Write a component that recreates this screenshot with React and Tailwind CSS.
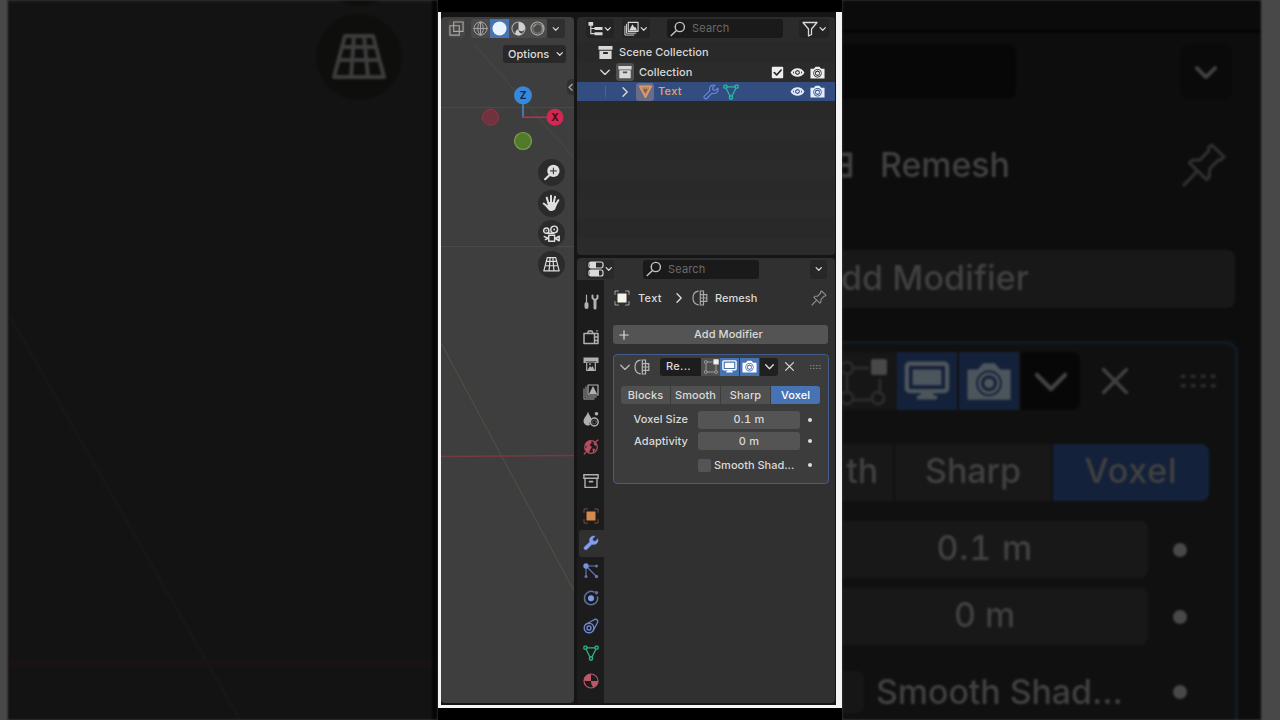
import React from "react";

const Svg = ({ className = "size-4", children, vb = "0 0 16 16", sw = 1.2 }) => (
  <svg viewBox={vb} className={"shrink-0 " + className} fill="none" stroke="currentColor" strokeWidth={sw} strokeLinecap="round" strokeLinejoin="round">
    {children}
  </svg>
);

const F = { fill: "currentColor", stroke: "none" };

const ChevronDown = ({ className = "size-[7.5px]", sw = 1.3 }) => (
  <Svg className={className} vb="0 0 8 8" sw={sw}><path d="M1.2 2.8 4 5.6 6.8 2.8" /></Svg>
);
const ChevronRight = ({ className = "size-3", sw = 1.4 }) => (
  <Svg className={className} vb="0 0 12 12" sw={sw}><path d="M4 1.8 8.200 6 4 10.200" /></Svg>
);
const Search = () => (
  <Svg className="size-4" sw={1.4}><circle cx="9.8" cy="6" r="4.6" /><path d="M6.5 9.5 1.2 14.6" /></Svg>
);
const Archive = ({ className }) => (
  <Svg className={className}>
    <path {...F} d="M0.5 1h15v4h-15z" />
    <path {...F} fillRule="evenodd" d="M1.5 6h13v9h-13z M5.5 7.5v2h5V7.5z" />
  </Svg>
);
const ArchiveLine = ({ className }) => (
  <Svg className={className} sw={1.4}><path strokeLinejoin="miter" d="M.9 1.7h14.2v3.5H.9zM2 5.4v9h12v-9" /><path d="M6.5 8.600h3" strokeWidth="1.800" /></Svg>
);
const Eye = () => (
  <Svg className="size-[15px]">
    <path {...F} fillRule="evenodd" d="M.6 8C3.5 1.8 12.500 1.800 15.400 8 12.500 14.200 3.500 14.200.6 8zM3 8c2 3.600 8 3.600 10 0-2-3.600-8-3.600-10 0z" />
    <circle cx="8" cy="8" r="3.200" strokeWidth="1.300" /><circle cx="8" cy="8" r="1.400" {...F} />
  </Svg>
);
const Camera = ({ className = "size-[15px]" }) => (
  <Svg className={className}>
    <path {...F} fillRule="evenodd" d="M.5 4h3.600L6 1.800h4L11.900 4h3.600v10.500H.5zM8 4.300a4.500 4.500 0 1 0 0 9 4.500 4.500 0 0 0 0-9z" />
    <circle cx="8" cy="8.800" r="3.300" strokeWidth="1" /><circle cx="8" cy="8.800" r="1.700" {...F} />
  </Svg>
);
const Monitor = ({ className = "size-4" }) => (
  <Svg className={className} sw={1.500}>
    <rect x="1" y="2" width="14" height="9.500" rx="1" /><path {...F} d="M3 4h10v5.500H3zM6 12h4l.5 1.200H5.500zM4.500 13h7v1.400h-7z" />
  </Svg>
);
const EditMode = ({ className = "size-4" }) => (
  <Svg className={className} sw={1}>
    <path d="M4.300 3h5M3 4.500v7M4.500 13h7M13 6.500v5" />
    <circle cx="2.800" cy="3" r="1.500" /><circle cx="2.800" cy="13" r="1.500" /><circle cx="13" cy="13" r="1.500" />
    <rect x="10.400" y=".3" width="5.300" height="5.300" rx=".6" fill="#f0f0f0" stroke="none" />
  </Svg>
);
const RemeshIcon = ({ className = "size-4" }) => (
  <Svg className={className} sw={1.2}>
    <path d="M6.200 1.200C2.800 1.800 1 4.500 1 8s1.800 6.200 5.200 6.800" />
    <path strokeLinejoin="miter" d="M8.300 1h3.200v14H8.300zM8.300 4.600h6.500v6.800H8.300M8.300 8h6.500" />
  </Svg>
);
const Pin = ({ className = "size-4" }) => (
  <Svg className={className} sw={1.1}><path d="M10.600 1 15 5.200 13.800 6.300 13 6.200 10 9.300 9.800 12.300 8.900 13.100 2.900 7.300 3.900 6.300 6.600 6.200 9.700 3 9.600 2zM5.600 10.200 1 15" /></Svg>
);
const Close = ({ className = "size-3" }) => (
  <Svg className={className} vb="0 0 12 12" sw={1.3}><path d="M1.700 1.700l8.600 8.600M10.300 1.700l-8.600 8.600" /></Svg>
);
const Grip = ({ className = "h-1.5 w-3" }) => (
  <svg viewBox="0 0 12 6" className={"shrink-0 " + className} fill="currentColor">
    {[0, 1, 2, 3].map((i) => (
      <g key={i}><rect x={i * 3 + 0.5} y="1.100" width="1.500" height="1" /><rect x={i * 3 + 0.5} y="3.900" width="1.500" height="1" /></g>
    ))}
  </svg>
);
const GridPersp = ({ className = "size-[17px]", sw = 1.1 }) => (
  <Svg className={className} sw={sw}><path d="M4 1.500h8l3.200 12.500H.8zM3.200 5h9.600M2.200 9.200h11.600M6.700 1.500 5.700 14M9.300 1.500l1 12.500" /></Svg>
);
const Wrench = ({ className = "size-4", fill = "none", sw = 1.1 }) => (
  <Svg className={className} sw={sw}>
    <path fill={fill} d="M14.800 4.100 12.300 6.300 10 5.900 9.600 3.700 12 1.200C9.500.5 7 1.800 6.600 4.300c-.2 1 0 1.800.2 2.600L1.300 12.100c-1.100 1.500.8 3.600 2.500 2.400L9 9.200c3.800 1.200 7-1.800 5.800-5.100z" />
  </Svg>
);
const Mesh = ({ className = "size-4" }) => (
  <Svg className={className} sw={1.3}>
    <path d="M4 2.800h8M3.200 4.500 7 12M12.800 4.500 9 12" />
    <rect x=".9" y="1.200" width="3" height="3" rx=".8" /><rect x="12.100" y="1.200" width="3" height="3" rx=".8" /><rect x="6.500" y="12" width="3" height="3" rx=".8" />
  </Svg>
);
const ObjectData = ({ className, color }) => (
  <Svg className={className} sw={1}>
    <path opacity=".65" d="M1 4.500V1h3.500M11.500 1H15v3.500M15 11.500V15h-3.500M4.500 15H1v-3.500" />
    <rect x="3.500" y="3.500" width="9" height="9" fill={color} stroke="none" />
  </Svg>
);

const HeaderBox = ({ className, children }) => (
  <div className={"flex h-[19px] shrink-0 items-center justify-center gap-px rounded-[3px] " + className}>{children}</div>
);

const SearchField = ({ className }) => (
  <div className={"flex h-[19px] shrink-0 items-center rounded-[3px] bg-[#1a1a1a] pl-[3px] font-normal text-[#6a6a6a] " + className}>
    <span className="flex text-[#c4c4c4]"><Search /></span>
    <span className="ml-[6px] tracking-[0.15px]">Search</span>
  </div>
);

const RoundButton = ({ children }) => (
  <div className="flex size-[27px] items-center justify-center rounded-full bg-[#2b2b2b] pr-px text-[#dedede]">{children}</div>
);

function Viewport() {
  return (
    <section className="relative flex h-[686px] w-[133px] shrink-0 flex-col overflow-hidden rounded-[4px] bg-[#3e3e3e]">
      <svg className="absolute inset-0" width="133" height="686" fill="none">
        <path d="M0 90.500h133M0 229.500h133" stroke="#4a4a4a" />
        <path d="M33 27 133 141" stroke="#4b4a40" />
        <path d="M0 326 133 574" stroke="#545341" />
        <path d="M0 439.500 133 438.500" stroke="#793940" strokeWidth="1.300" />
      </svg>
      <div className="relative flex h-[23px] items-center pl-[7px] text-[#a9a9a9]">
        <div className="flex h-[19px] w-[17px] items-center justify-center rounded-sm bg-[#484644]">
          <Svg className="size-[15px]"><path d="M5 1h10v10H5zM1 5h10v10H1z" strokeLinejoin="miter" /></Svg>
        </div>
        <div className="ml-[6px] flex h-[19px] overflow-hidden rounded-[3px] bg-[#4b4a48]">
          <span className="flex w-[19px] items-center justify-center"><Svg className="size-[15px]" sw={1}><circle cx="8" cy="8" r="7" /><path d="M1 8h14M8 1v14M8 1C4 4 4 12 8 15M8 1c4 3 4 11 0 14" /></Svg></span>
          <span className="flex w-[19px] items-center justify-center bg-[#4772b3] text-[#e9f2ff]"><Svg className="size-[15px]"><circle cx="8" cy="8" r="7.500" {...F} /></Svg></span>
          <span className="flex w-[19px] items-center justify-center"><Svg className="size-[15px]"><circle cx="8" cy="8" r="7" /><path {...F} fill="#d0d0d0" d="M8 1a7 7 0 0 1 7 7c-1 3-5 4-7 1V1zM8 9c-2 0-3 1-3.500 5C6 15.500 10 15.500 12 14 9 13 8 11 8 9z" /></Svg></span>
          <span className="flex w-[19px] items-center justify-center"><Svg className="size-[15px]"><circle cx="8" cy="8" r="7" /><circle cx="8" cy="8" r="5" opacity=".5" /><path {...F} d="M12 2.500a7 7 0 0 1 1 10C14 9 13 6 12 2.500zM3.500 7c0-2 2-3.500 4-3.500C6 4.500 5 6 3.500 7z" /></Svg></span>
        </div>
        <div className="flex h-[19px] w-[18px] items-center justify-center rounded-r-[3px] bg-[#2f2f2f] text-[#d0d0d0]"><ChevronDown /></div>
      </div>
      <div className="relative ml-[62px] mt-[5px] flex h-[18px] w-[63px] items-center justify-between rounded-[3px] bg-[#292929] pl-[5px] pr-[3px] text-[#dedede]">
        Options<ChevronDown />
      </div>
      <div className="relative mt-px h-[90px]">
        <svg width="133" height="90" viewBox="441 64 133 90" fill="none">
          <path d="M523 104v13.500" stroke="#4a8ac4" strokeWidth="1.600" /><path d="M522.500 117.200H547" stroke="#bd3050" strokeWidth="1.600" />
          <circle cx="523" cy="95.300" r="9" fill="#3688dd" /><circle cx="555" cy="117.200" r="8.500" fill="#d02850" />
          <circle cx="490.500" cy="117.300" r="8" fill="#71323f" stroke="#943448" /><circle cx="523" cy="141" r="8.500" fill="#527a2b" stroke="#7ca347" strokeWidth="1.200" />
          <text x="523" y="99" textAnchor="middle" fontSize="10" fontWeight="700" fill="#10294a">Z</text>
          <text x="555" y="121" textAnchor="middle" fontSize="10" fontWeight="700" fill="#3e0b1b">X</text>
          <path d="M574 79h-3a5 5 0 0 0-4 4v8a5 5 0 0 0 4 4h3z" fill="#303030" /><path d="m572.500 84-3.500 3.300 3.500 3.300" stroke="#b0b0b0" strokeWidth="1.200" />
        </svg>
      </div>
      <div className="relative ml-[97px] mt-[5px] flex w-[27px] flex-col gap-[3.500px]">
        <RoundButton><Svg className="size-[17px]"><circle cx="9.800" cy="6.500" r="5.800" {...F} /><path d="M6 10.500 2 14.300" strokeWidth="2" /><path d="M9.800 3.800v5.400M7.100 6.500h5.400" stroke="#444" strokeWidth="1.100" /></Svg></RoundButton>
        <RoundButton><Svg className="size-[18px]"><path d="M5.800 8.500 4.200 3.200M8 7.500V1.500M10.300 8l1.300-5.500M12.200 9.500l2.300-4M5.500 11.500 1.500 8.500" strokeWidth="1.800" /><path {...F} d="M4.900 7h6.500l2 1.800-1.500 4.400C11 15.500 7 15.800 5.500 13.800L2.800 10.500l2.300-.5z" /></Svg></RoundButton>
        <RoundButton><Svg className="size-[18px]" sw={1.300}><circle cx="3.800" cy="5" r="2.300" /><circle cx="10.800" cy="4" r="3" /><circle cx="3.800" cy="5" r=".6" {...F} /><circle cx="10.800" cy="4" r=".8" {...F} /><path d="M4.500 7.300h6M6 9.200h5.200v5.300H6zM2 10.300l3.500 1.500L3 13M12 12l3.300-2v4z" /></Svg></RoundButton>
        <RoundButton><GridPersp /></RoundButton>
      </div>
    </section>
  );
}

function Outliner() {
  return (
    <section className="flex h-[238px] flex-col overflow-hidden rounded-[4px] bg-[#292929] text-[#d8d8d8]">
      <div className="flex h-[25px] shrink-0 items-center bg-[#2b2b2b] pb-0.5 pl-[9px]">
        <HeaderBox className="w-7 bg-[#242424]"><Svg className="size-[15px]"><path {...F} d="M.5 1h5v4h-5zM7 6.500h8.500v3.200H7zM7 12h8.500v3.200H7z" /><path d="M3 5v8.500h4M3 8h4" /></Svg><ChevronDown /></HeaderBox>
        <HeaderBox className="ml-[8px] w-7 bg-[#242424]"><Svg className="size-[15px]"><path d="M4.500 1.500h10.500v9.500H4.500z" /><path d="M2.700 3.500v9.500h10M1 5.500V15h9.500" strokeWidth="1" /><path {...F} d="m5.500 10 3.500-6.500 2 3.500 1-1 2 4z" /></Svg><ChevronDown /></HeaderBox>
        <SearchField className="ml-[17px] w-[116px]" />
        <HeaderBox className="ml-[16px] w-[30px] gap-[3px] bg-[#242424]"><Svg className="size-4" sw={1.300}><path d="M1 1.500h14L9.500 8v5.500l-3 1.500V8z" /></Svg><ChevronDown /></HeaderBox>
      </div>
      <div className="flex h-5 shrink-0 items-center pl-[21px]">
        <Archive className="size-[15px]" /><span className="ml-[6px]">Scene Collection</span>
      </div>
      <div className="flex h-5 shrink-0 items-center bg-[#2b2b2b] pl-[22px] pr-[10px]">
        <ChevronDown className="size-[12px]" sw={0.900} />
        <span className="ml-[5px] flex size-[18px] items-center justify-center rounded-[3px] bg-[#505050]"><Archive className="size-[14px]" /></span>
        <span className="ml-[5px]">Collection</span>
        <span className="ml-auto flex items-center gap-[6px] text-[#eee]">
          <Svg className="size-[13px]"><rect x="1" y="1" width="14" height="14" rx="1" {...F} /><path d="m4 8 3 3 5.500-6" stroke="#222" strokeWidth="2" /></Svg>
          <Eye /><span className="-ml-px flex"><Camera /></span>
        </span>
      </div>
      <div className="flex h-[19px] shrink-0 items-center bg-[#334d80] pl-7 pr-[10px]">
        <span className="h-[11px] w-px bg-[#4c6496]" />
        <span className="ml-[13px] flex"><ChevronRight /></span>
        <span className="ml-[5px] flex size-[18px] items-center justify-center rounded-[3px] bg-[#696c86] text-[#d99c72]"><Svg className="size-[15px]" sw={2}><path d="M2 2.500h12L8 14z" fill="#b8805e" /><path d="M6.800 6h2.400L8 8.500z" stroke="#6b5250" strokeWidth="1" /></Svg></span>
        <span className="ml-1 w-[45px] tracking-[0.3px] text-[#e0a468]">Text</span>
        <span className="flex gap-1"><span className="flex text-[#6f8ae2]"><Wrench className="size-[16px]" /></span><span className="flex text-[#26bba6]"><Mesh className="size-[16px]" /></span></span>
        <span className="ml-auto flex items-center gap-[5px] text-[#e4edff]"><Eye /><Camera /></span>
      </div>
      {["a", "b", "c", "d"].map((k) => (
        <div key={k} className="shrink-0"><div className="h-5 bg-[#292929]" /><div className="h-[19px] bg-[#2b2b2b]" /></div>
      ))}
    </section>
  );
}

const NavItem = ({ className = "text-[#b0b0b0]", children }) => (
  <div className={"ml-[2px] flex h-[27.500px] w-[25px] shrink-0 items-center justify-center rounded-l-[3px] pr-px " + className}>{children}</div>
);

function Nav() {
  return (
    <nav className="flex w-[27px] shrink-0 flex-col bg-[#1c1c1c] pt-[8.500px]">
      <NavItem><Svg className="size-4"><path d="M3.500 1v8" /><path d="M3.500 10v3" strokeWidth="4" /><path d="M12 7v7" strokeWidth="3" /><path d="M9.500 1.500v2.500L12 6.500l2.500-2.500V1.500" strokeWidth="2" /></Svg></NavItem>
      <div className="h-[7px]" />
      <NavItem><Svg className="size-4" sw={1.500}><path d="M1 4.500h14v10H1zM4.500 4.500l1-2.500h3.500l1 2.500M11.500 4.500v10M11.500 8H15M11.500 11.500H15M14 1.800v.2" /></Svg></NavItem>
      <NavItem><Svg className="size-4"><path {...F} d="M.5 1.500h15V7h-2.300V5H2.800v2H.5z" /><path d="M3.700 6h8.600v8.500H3.700z" /><path {...F} d="m4.500 14 2.500-4 1.500 1.500L9.500 10l2 4zM6 7.500h2v1.300H6z" /></Svg></NavItem>
      <NavItem><Svg className="size-4"><path d="M5 1h10v10H5z" /><path d="M3 3v10h10M1 5v10h10" strokeWidth="1.400" opacity=".65" /><path {...F} d="m6 10 4-8 4 8z" /></Svg></NavItem>
      <NavItem><Svg className="size-4"><path {...F} d="M5 .5c1 4 4 6 3.500 8.500C6.500 10 6 12 7 14c-3 1.500-6.500-.5-6.500-4C.5 7 4 5 5 .5z" /><circle cx="13.500" cy="2.800" r="1.800" {...F} /><circle cx="11.300" cy="11" r="3.900" strokeWidth="1.500" /><circle cx="11.300" cy="11" r="2" strokeWidth=".6" opacity=".6" /></Svg></NavItem>
      <NavItem className="text-[#b84c61]"><Svg className="size-4"><circle cx="8" cy="8" r="6.300" /><path {...F} d="M2 6c2-4 4-4 6-4.500L8.500 4l-2 2 2.500 2-2 3-1 3C4 13 2 11 2 9l2-1zM11 2.500l3 3.500-1.500 1-2-2zM9.500 9.500l3 .5-2.500 4z" /><path d="m12.500 3 2.500-2M2.500 13.500l-1.300 1.500" /></Svg></NavItem>
      <div className="h-[7px]" />
      <NavItem><ArchiveLine className="size-4" /></NavItem>
      <div className="h-[7px]" />
      <NavItem className="text-[#a36a44]"><ObjectData className="size-4" color="#d38a50" /></NavItem>
      <NavItem className="bg-[#303030] text-[#7f9df5]"><Wrench className="size-4" fill="currentColor" sw={0.500} /></NavItem>
      <NavItem className="text-[#6578ad]"><Svg className="size-4"><path d="M3 3h10M3 3v10M4 4l9 9" /><circle cx="3" cy="3" r="2.700" {...F} fill="#7892e0" /><circle cx="13.500" cy="3" r="1.500" {...F} /><circle cx="3" cy="13.500" r="1.500" {...F} /><circle cx="13.500" cy="13.500" r="1.700" {...F} /></Svg></NavItem>
      <NavItem className="text-[#5e7094]"><Svg className="size-4" sw={1.500}><path d="M11 2C7 0 1.500 3 1.500 8.500c0 5 5.500 7.500 9.500 5.500 2.500-1.300 4-4 3.500-7" /><circle cx="8" cy="8.300" r="3" {...F} fill="#7d9cf0" /><circle cx="13.500" cy="2.800" r="1.800" {...F} /></Svg></NavItem>
      <NavItem className="text-[#6a86cc]"><Svg className="size-4" sw={1.400}><circle cx="6" cy="10" r="4.800" /><circle cx="6" cy="10" r="2" /><path d="M2.500 6.500 11.500 1.500c2-.8 4 1 3 3L10 13" /></Svg></NavItem>
      <NavItem className="text-[#2db67c]"><Mesh className="size-4" /></NavItem>
      <NavItem className="text-[#c0566a]"><Svg className="size-4"><circle cx="8" cy="8" r="7" /><path {...F} d="M8 1v7H3C1.500 8 1 7 1 7 1.500 3.500 4.500 1 8 1zM8 8h7c-.5 3-2 5-4.500 6.300C8.500 13 8 10 8 8z" /></Svg></NavItem>
    </nav>
  );
}

const Field = ({ label, value }) => (
  <div className="flex h-[18px] items-center">
    <span className="w-[74px] whitespace-nowrap text-right">{label}</span>
    <span className="ml-[10px] flex h-full w-[102px] items-center justify-center rounded-[3px] bg-[#545454] tabular-nums tracking-[0.25px]">{value}</span>
    <span className="ml-[8px] size-[4px] rounded-full bg-[#dedede]" />
  </div>
);

function Properties() {
  return (
    <section className="mt-[3px] flex h-[445px] flex-col overflow-hidden rounded-[4px] bg-[#303030] text-[#dadada]">
      <div className="flex h-[22px] shrink-0 items-center pl-[9px]">
        <HeaderBox className="w-[28px] bg-[#292929]"><Svg className="size-[16px]"><rect x="1" y="1" width="14" height="6" rx="2" /><rect x="1" y="9" width="14" height="6" rx="2" /><path {...F} d="M2 1h6v6H2zM2 9h9v6H2z" /></Svg><ChevronDown /></HeaderBox>
        <SearchField className="ml-[29px] w-[116px]" />
        <HeaderBox className="ml-[51px] w-[17px] bg-[#272727]"><ChevronDown /></HeaderBox>
      </div>
      <div className="flex grow">
        <Nav />
        <div className="w-[231px] pl-[9px] pr-[7px]">
          <div className="mt-2 flex h-5 items-center pl-px pr-px">
            <ObjectData className="size-4" color="#f3f3ea" />
            <span className="ml-2 w-[35px] tracking-[0.3px]">Text</span>
            <ChevronRight className="size-3" />
            <span className="ml-[7px] flex text-[#a8a8a8]"><RemeshIcon /></span>
            <span className="ml-[7px]">Remesh</span>
            <span className="ml-auto flex text-[#8e8e8e]"><Pin /></span>
          </div>
          <div className="mt-[17px] flex h-[19px] items-center rounded-[3px] bg-[#545454]">
            <span className="flex w-[22px] justify-center"><Svg className="size-[10px]" vb="0 0 10 10"><path d="M5 .8v8.400M.8 5h8.400" /></Svg></span>
            <span className="grow pr-[6px] text-center">Add Modifier</span>
          </div>
          <div className="mt-[10px] h-[130px] w-[216px] rounded-[4px] border border-[#405d8e] bg-[#3c3c3c]">
            <div className="mt-[2px] flex h-[19px] items-center pl-[5px]">
              <span className="flex text-[#b5b5b5]"><ChevronDown className="size-3" sw={0.900} /></span>
              <span className="ml-[3px] flex text-[#b5b5b5]"><RemeshIcon /></span>
              <span className="ml-[10px] flex h-[18px] w-[41px] items-center rounded-l-[3px] bg-[#1d1d1d] pl-[6px] tracking-[0.3px]">Re...</span>
              <span className="flex h-[18px] w-[19px] items-center justify-center bg-[#4f4f4f] text-[#999]"><EditMode className="size-[16px]" /></span>
              <span className="flex h-[18px] w-[19px] items-center justify-center bg-[#4772b3] text-white"><Monitor className="size-[15px]" /></span>
              <span className="ml-px flex h-[18px] w-[19px] items-center justify-center bg-[#4772b3] text-white"><Camera className="size-[15px]" /></span>
              <span className="ml-px flex h-[18px] w-[18px] items-center justify-center rounded-r-[3px] bg-[#202020]"><ChevronDown className="size-[11px]" sw={1} /></span>
              <span className="ml-[6px] flex"><Close className="size-[11px]" /></span>
              <span className="ml-[14px] flex text-[#888]"><Grip className="h-1.5 w-[13px]" /></span>
            </div>
            <div className="ml-[7px] mt-[10px] flex h-[18px] w-[199px] gap-px overflow-hidden rounded-[3px] text-center leading-[18px]">
              <span className="w-[49px] bg-[#505050]">Blocks</span>
              <span className="w-[49px] bg-[#505050]">Smooth</span>
              <span className="w-[49px] bg-[#505050]">Sharp</span>
              <span className="w-[49px] bg-[#4772b3] text-white">Voxel</span>
            </div>
            <div className="mt-[6.500px] flex flex-col gap-[3.500px]">
              <Field label="Voxel Size" value="0.1 m" />
              <Field label="Adaptivity" value="0 m" />
            </div>
            <div className="mt-[6px] flex h-[18px] items-center pl-[84px]">
              <span className="size-[13px] rounded-[2px] bg-[#545454]" />
              <span className="ml-[3px] w-[94px] whitespace-nowrap tracking-[0px]">Smooth Shad...</span>
              <span className="size-[4px] rounded-full bg-[#dedede]" />
            </div>
          </div>
        </div>
      </div>
    </section>
  );
}

function BackdropLeft() {
  return (
    <div className="flex h-[720px] w-[438px] shrink-0 overflow-hidden bg-[#484848]">
      <div className="ml-2 w-[430px] border-l border-r-[6px] border-[#060606] bg-[#131313] blur-[0.9px]">
        <svg width="423" height="720" viewBox="9 0 423 720" fill="none">
          <path d="M9 1.500h423" stroke="#181818" strokeWidth="3" />
          <path d="M9 315 240 720" stroke="#171713" strokeWidth="3" />
          <path d="M9 663h423" stroke="#1e1113" strokeWidth="4" />
          <circle cx="359" cy="-37" r="43" fill="#0e0e0c" /><circle cx="359" cy="57" r="43" fill="#0e0e0c" />
          <path d="M345 36h28l11 41h-50zM341 47h36M338 60h42M354 36l-3 41M364 36l4 41" stroke="#3c3c3c" strokeWidth="4" strokeLinejoin="round" />
        </svg>
      </div>
    </div>
  );
}

const BigField = ({ children }) => (
  <div className="flex h-[57px] items-center">
    <div className="flex h-full w-[306px] items-center justify-end rounded-r-lg bg-[#181818] tabular-nums">{children}</div>
    <span className="ml-[25px] size-[14px] rounded-full bg-[#484848]" />
  </div>
);

function BackdropRight() {
  return (
    <div className="flex h-[720px] w-[438px] shrink-0 overflow-hidden bg-[#484848]">
      <div className="w-[419px] overflow-hidden bg-[#0d0d0d] text-[34px] leading-none tracking-[-0.1px] text-[#414141] blur-[0.9px]">
        <div className="h-[33px] border-b-[3px] border-[#040404] bg-[#0b0b0b]" />
        <div className="mt-[11px] flex h-[55px] items-center">
          <div className="h-full w-[174px] rounded-r-lg bg-[#070707]" />
          <div className="ml-[164px] flex h-full w-[52px] items-center justify-center rounded-lg bg-[#0a0a0b]"><ChevronDown className="size-[26px]" sw={1.200} /></div>
        </div>
        <div className="mt-[41px] flex h-[50px] items-center">
          <span className="-ml-[38px] flex"><RemeshIcon className="size-[50px]" /></span>
          <span className="ml-[26px]">Remesh</span>
          <span className="ml-auto mr-[34px] flex text-[#303030]"><Pin className="size-[46px]" /></span>
        </div>
        <div className="mt-[60px] flex h-[58px] w-[393px] items-center justify-end rounded-r-lg bg-[#181818] pb-[2px] pr-[206px]"><span className="whitespace-nowrap tracking-[0.1px]">dd Modifier</span></div>
        <div className="mt-[33px] h-[420px] w-[396px] rounded-tr-xl border-r-[3px] border-t-[3px] border-[#121b25] bg-[#101010]">
          <div className="mt-2 flex h-[58px] items-center overflow-hidden">
            <span className="flex h-full w-[55px] shrink-0 items-center bg-[#161616] text-[#2e2e2e]"><svg viewBox="0 0 55 58" className="h-[58px] w-[55px]" fill="none"><path d="M12 16h15M38 27v16M12 48h17M5 23v18" stroke="#2b2b2b" strokeWidth="3" /><circle cx="5" cy="16" r="6" stroke="#2b2b2b" strokeWidth="3" /><circle cx="5" cy="46" r="6" stroke="#2b2b2b" strokeWidth="3" /><circle cx="36" cy="46" r="6" stroke="#2b2b2b" strokeWidth="3" /><rect x="29" y="7" width="16" height="16" rx="2" fill="#484848" /></svg></span>
            <span className="flex h-full w-[60px] items-center justify-center bg-[#14213a] text-[#4d555c]"><Monitor className="size-[46px]" /></span>
            <span className="ml-[2px] flex h-full w-[60px] items-center justify-center bg-[#14213a] text-[#4d555c]"><Camera className="size-[46px]" /></span>
            <span className="ml-[2px] flex h-full w-[59px] items-center justify-center rounded-r-lg bg-[#070707]"><ChevronDown className="size-[40px]" sw={0.900} /></span>
            <span className="ml-[19px] flex"><Close className="size-[32px]" /></span>
            <span className="ml-[48px] flex text-[#2e2e2e]"><Grip className="h-[20px] w-[40px]" /></span>
          </div>
          <div className="mt-[34px] flex h-[57px] items-center overflow-hidden">
            <span className="flex h-full w-[51px] shrink-0 items-center justify-end bg-[#181818] pb-[3px] pr-[15px]">th</span>
            <span className="ml-[2px] flex h-full w-[156px] items-center justify-center bg-[#181818] pb-[3px]">Sharp</span>
            <span className="ml-[2px] flex h-full w-[156px] items-center justify-center rounded-r-lg bg-[#14213a] pb-[3px] tracking-[0.8px]">Voxel</span>
          </div>
          <div className="mt-5 flex flex-col gap-[10px]">
            <BigField><span className="mr-[115px] pb-[3px] tracking-[0.8px]">0.1 m</span></BigField>
            <BigField><span className="mr-[133px] pb-[3px]">0 m</span></BigField>
          </div>
          <div className="mt-[18px] flex h-[58px] items-center">
            <span className="h-[42px] w-[22px] rounded-r-md bg-[#161616]" />
            <span className="ml-[12px] w-[297px] whitespace-nowrap">Smooth Shad...</span>
            <span className="size-[14px] rounded-full bg-[#484848]" />
          </div>
        </div>
      </div>
    </div>
  );
}

export default function App() {
  return (
    <main className="flex h-[720px] w-[1280px] overflow-hidden bg-black font-['Inter',sans-serif] text-[11px] font-medium leading-none tracking-[0.050px]">
      <BackdropLeft />
      <div className="h-[720px] w-[404px] shrink-0 bg-black pt-3">
        <div className="flex h-[696px] w-[404px] gap-[3px] border-b-[3px] border-l-[3px] border-r-[6px] border-[#f4f4f4] bg-[#151515] pt-[5px]">
          <Viewport />
          <div className="w-[258px] shrink-0">
            <Outliner />
            <Properties />
          </div>
        </div>
      </div>
      <BackdropRight />
    </main>
  );
}
